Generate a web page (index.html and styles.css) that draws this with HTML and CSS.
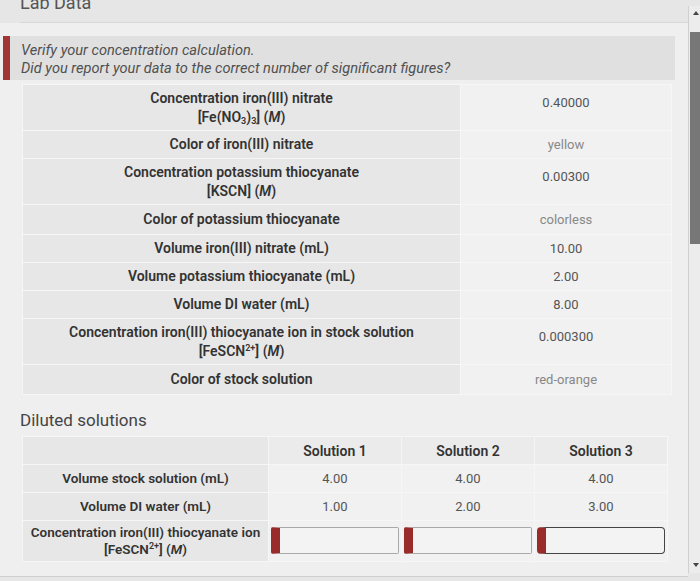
FILE: index.html
```html
<!DOCTYPE html>
<html>
<head>
<meta charset="utf-8">
<link rel="stylesheet" href="styles.css">
</head>
<body>
<div class="page">
  <h2 class="page-title">Lab Data</h2>
  <div class="card">
    <div class="feedback">
      <p>Verify your concentration calculation.</p>
      <p>Did you report your data to the correct number of significant figures?</p>
    </div>
    <table class="data">
      <tr class="two"><th>Concentration iron(III) nitrate<br>[Fe(NO<sub>3</sub>)<sub>3</sub>] (<i>M</i>)</th><td>0.40000</td></tr>
      <tr><th>Color of iron(III) nitrate</th><td class="light">yellow</td></tr>
      <tr class="two"><th>Concentration potassium thiocyanate<br>[KSCN] (<i>M</i>)</th><td>0.00300</td></tr>
      <tr class="tall"><th>Color of potassium thiocyanate</th><td class="light">colorless</td></tr>
      <tr><th>Volume iron(III) nitrate (mL)</th><td>10.00</td></tr>
      <tr><th>Volume potassium thiocyanate (mL)</th><td>2.00</td></tr>
      <tr><th>Volume DI water (mL)</th><td>8.00</td></tr>
      <tr class="two"><th>Concentration iron(III) thiocyanate ion in stock solution<br>[FeSCN<sup>2+</sup>] (<i>M</i>)</th><td>0.000300</td></tr>
      <tr class="tall"><th>Color of stock solution</th><td class="light">red-orange</td></tr>
    </table>
    <h3 class="section-title">Diluted solutions</h3>
    <table class="dilute">
      <tr class="head"><th></th><th>Solution 1</th><th>Solution 2</th><th>Solution 3</th></tr>
      <tr><th>Volume stock solution (mL)</th><td>4.00</td><td>4.00</td><td>4.00</td></tr>
      <tr><th>Volume DI water (mL)</th><td>1.00</td><td>2.00</td><td>3.00</td></tr>
      <tr class="inputs"><th>Concentration iron(III) thiocyanate ion<br>[FeSCN<sup>2+</sup>] (<i>M</i>)</th>
        <td><div class="field"></div></td>
        <td><div class="field"></div></td>
        <td><div class="field active"></div></td></tr>
    </table>
  </div>
  <div class="scrollbar">
    <span class="arrow up"></span>
    <span class="thumb"></span>
    <span class="arrow down"></span>
  </div>
</div>
</body>
</html>
```
FILE: styles.css
```css
* { box-sizing: border-box; }
html, body { margin: 0; padding: 0; }
body {
  width: 700px;
  height: 581px;
  overflow: hidden;
  background: #e6e6e6;
  font-family: Roboto, "Liberation Sans", sans-serif;
  color: #333;
}
.page {
  position: relative;
  height: 581px;
  padding-right: 12px;
}
.page-title {
  margin: -8px 0 0 20px;
  font-size: 18px;
  font-weight: 400;
  color: #555;
  height: 31px;
  line-height: 22px;
  border-bottom: 1px solid #d8d8d8;
}
.card {
  background: #efefef;
  height: 554px;
  border-bottom: 1px solid #cfcfcf;
  padding-top: 13px;
}
.feedback {
  margin: 0 13px 0 3px;
  background: #e0e0e0;
  border-left: 7px solid #a23535;
  padding: 5px 11px 3px;
  height: 44px;
  font-style: italic;
  font-size: 14.6px;
  line-height: 18px;
  color: #505050;
}
.feedback p { margin: 0; }
table { border-collapse: collapse; }
.data {
  margin: 4px 0 0 22px;
  width: 650px;
}
th, td {
  text-align: center;
  font-size: 13px;
  line-height: 19px;
  padding: 4px 8px;
  border: 1px solid #f6f6f6;
}
th {
  font-weight: 600;
  color: #333;
  background: #e7e7e7;
}
.data th { font-size: 14px; width: 438px; }
td {
  font-weight: 400;
  color: #555;
  background: #f1f1f1;
}
.data tr.two th { padding-top: 4px; padding-bottom: 3px; }
.data tr.two td { vertical-align: top; padding-top: 8px; }
.data tr.tall th, .data tr.tall td { padding-top: 5px; padding-bottom: 5px; }
td.light { color: #888; }
sub, sup { font-size: 9px; line-height: 0; }
sub { vertical-align: -2px; }
sup { vertical-align: 5px; }
.section-title {
  margin: 13px 0 0 20px;
  font-size: 17px;
  font-weight: 400;
  color: #444;
  line-height: 24px;
}
.dilute {
  margin: 4px 0 0 22px;
  width: 646px;
}
.dilute th { font-size: 13.5px; }
.dilute th:first-child { width: 246px; }
.dilute tr.head th { font-size: 14px; background: #ebebeb; padding-top: 5px; padding-bottom: 3px; }
.dilute tr.head th:first-child { background: #e7e7e7; }
.dilute td { width: 133px; }
.dilute tr.inputs th { white-space: nowrap; line-height: 17px; padding: 3px 2px; }
.dilute tr.inputs td { padding: 2px 2px 4px; }
.field {
  height: 27px;
  background: #f3f3f3;
  border: 1px solid #a9a9a9;
  border-left: 9px solid #9a2b2b;
  border-radius: 2px;
}
.field.active {
  border-color: #444;
  border-left: 9px solid #9a2b2b;
  border-radius: 4px;
}
.scrollbar {
  position: absolute;
  top: 14px;
  right: 0;
  width: 12px;
  height: 567px;
  border-left: 1px solid #d0d0d0;
  background: #ececec;
}
.thumb {
  position: absolute;
  top: 26px;
  left: 1px;
  width: 11px;
  height: 212px;
  background: #777;
}
.arrow {
  position: absolute;
  left: 4px;
  width: 0;
  height: 0;
  border-left: 3px solid transparent;
  border-right: 3px solid transparent;
}
.arrow.up { top: 5px; border-bottom: 4px solid #444; }
.arrow.down { bottom: 6px; border-top: 4px solid #444; }
```
